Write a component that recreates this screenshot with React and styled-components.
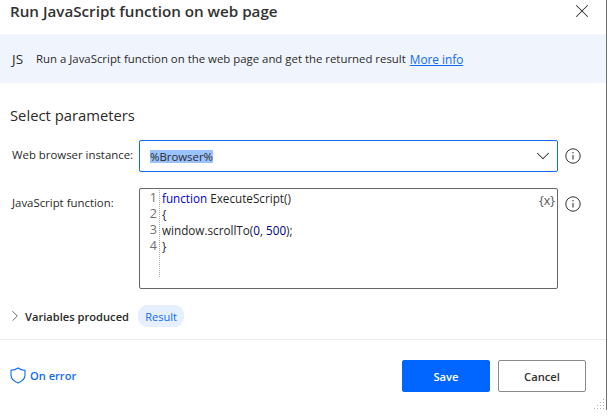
import React from 'react';
import styled, { createGlobalStyle } from 'styled-components';
import { ChevronDown, ChevronRight, X } from 'lucide-react';

const GlobalStyle = createGlobalStyle`
  html, body {
    margin: 0;
    padding: 0;
    background: #fff;
  }
  body {
    font-family: "Open Sans", "Noto Sans", "Liberation Sans", sans-serif;
    color: #2b2a29;
  }
`;

const Dialog = styled.div`
  width: 607px;
  height: 410px;
  box-sizing: border-box;
  border-right: 1px solid #6e6e6e;
  display: flex;
  flex-direction: column;
  background: #fff;
`;

const Header = styled.div`
  height: 34px;
  flex: none;
  box-sizing: border-box;
  display: flex;
  align-items: flex-start;
  justify-content: space-between;
  padding: 0 13px 0 10px;
`;

const Title = styled.h1`
  margin: 0;
  font-size: 15.2px;
  line-height: 22px;
  font-weight: 600;
  color: #323130;
`;

const CloseButton = styled.button`
  border: 0;
  background: none;
  padding: 0;
  display: flex;
  color: #323130;
`;

const Banner = styled.div`
  height: 49px;
  flex: none;
  background: #f0f5fd;
  display: flex;
  align-items: center;
  padding-left: 12px;
  font-size: 11.4px;
  white-space: nowrap;
`;

const BannerIcon = styled.span`
  font-size: 13.5px;
  width: 24px;
`;

const MoreInfo = styled.a`
  color: #0f6cf0;
  font-size: 11.8px;
  text-decoration: underline;
  margin-left: 4px;
`;

const Form = styled.div`
  flex: 1;
  padding: 21px 0 0 10px;
  display: flex;
  flex-direction: column;
`;

const Section = styled.h2`
  margin: 0 0 14px;
  font-size: 14.8px;
  line-height: 22px;
  font-weight: 400;
`;

const Row = styled.div`
  display: grid;
  grid-template-columns: 129px 419px auto;
  margin-bottom: 16px;
`;

const Label = styled.label`
  font-size: 11.4px;
  line-height: 30px;
  padding-left: 2px;
  white-space: nowrap;
`;

const Select = styled.div`
  height: 32px;
  box-sizing: border-box;
  border: 1px solid #0f6cf0;
  border-radius: 2px;
  display: flex;
  align-items: center;
  justify-content: space-between;
  padding: 0 3px 0 10px;
  font-size: 11.4px;
`;

const Selected = styled.span`
  background: #99c2ff;
  line-height: 13px;
`;

const Editor = styled.div`
  position: relative;
  height: 101px;
  box-sizing: border-box;
  border: 1px solid #666;
  border-radius: 2px;
  padding-top: 1px;
  display: flex;
  font-size: 11.7px;
  color: #1f1f1f;
`;

const Gutter = styled.div`
  width: 20px;
  height: 87px;
  flex: none;
  box-sizing: border-box;
  padding-right: 2px;
  border-right: 1px dotted #aaa;
  text-align: right;
  color: #6e6e6e;
  font-size: 12.5px;
  line-height: 16px;
`;

const Code = styled.div`
  padding-left: 2px;
  line-height: 16px;
`;

const Line = styled.div`
  white-space: pre;
`;

const Keyword = styled.span`
  color: #0000e0;
`;

const Num = styled.span`
  color: #000080;
`;

const VarToken = styled.span`
  position: absolute;
  top: 4px;
  right: 2px;
  font-size: 12.5px;
  line-height: 16px;
  color: #555;
`;

const InfoCell = styled.div`
  display: flex;
  padding: 8px 0 0 7px;
`;

const Variables = styled.div`
  display: flex;
  align-items: center;
  height: 22px;
  font-size: 11.15px;
  font-weight: 600;
`;

const Caret = styled.span`
  display: flex;
  width: 19px;
  margin-left: -4px;
  color: #555;
`;

const Chip = styled.span`
  margin-left: 9px;
  height: 22px;
  width: 46px;
  display: flex;
  align-items: center;
  justify-content: center;
  border-radius: 9px;
  background: #e6effd;
  color: #0f6cf0;
  font-size: 11px;
  font-weight: 400;
`;

const Footer = styled.div`
  height: 71px;
  flex: none;
  box-sizing: border-box;
  border-top: 1px solid #ebebeb;
  display: flex;
  align-items: flex-start;
  justify-content: space-between;
  padding: 20px 20px 0 10px;
`;

const ErrorLink = styled.a`
  display: flex;
  align-items: center;
  gap: 4px;
  height: 32px;
  padding-bottom: 2px;
  box-sizing: border-box;
  color: #0f6cf0;
  font-size: 11.1px;
  font-weight: 600;
`;

const Actions = styled.div`
  display: flex;
  gap: 8px;
`;

const Button = styled.button`
  width: 88px;
  height: 32px;
  box-sizing: border-box;
  border-radius: 2px;
  border: 1px solid ${(p) => (p.$primary ? '#0066ff' : '#8a8a8a')};
  background: ${(p) => (p.$primary ? '#0066ff' : '#fff')};
  color: ${(p) => (p.$primary ? '#fff' : '#323130')};
  font-family: inherit;
  font-size: 11.2px;
  font-weight: 600;
  padding: 0;
`;

const Grip = styled.svg`
  position: absolute;
  left: 594px;
  top: 398px;
`;

function InfoIcon() {
  return (
    <svg width="16" height="16" viewBox="0 0 16 16" fill="none" stroke="#323130">
      <circle cx="8" cy="8" r="7.2" />
      <path d="M8 7v4.6" />
      <circle cx="8" cy="4.8" r="0.7" fill="#323130" stroke="none" />
    </svg>
  );
}

function ShieldIcon() {
  return (
    <svg width="16" height="17" viewBox="0 0 16 17" fill="none" stroke="#0f6cf0" strokeWidth="1.1">
      <path d="M8 1 C10 2.6 12.6 3.2 15 3.2 V8 C15 11.8 12 14.4 8 16 C4 14.4 1 11.8 1 8 V3.2 C3.4 3.2 6 2.6 8 1 Z" />
    </svg>
  );
}

const GRIP_DOTS = [[9, 1], [6, 4], [9, 4], [3, 7], [6, 7], [9, 7], [0, 10], [3, 10], [6, 10], [9, 10]];

export default function App() {
  return (
    <>
      <GlobalStyle />
      <Dialog>
        <Header>
          <Title>Run JavaScript function on web page</Title>
          <CloseButton><X size={22} strokeWidth={1.1} /></CloseButton>
        </Header>
        <Banner>
          <BannerIcon>JS</BannerIcon>
          Run a JavaScript function on the web page and get the returned result
          <MoreInfo>More info</MoreInfo>
        </Banner>
        <Form>
          <Section>Select parameters</Section>
          <Row>
            <Label>Web browser instance:</Label>
            <Select>
              <Selected>%Browser%</Selected>
              <ChevronDown size={22} strokeWidth={1.1} />
            </Select>
            <InfoCell><InfoIcon /></InfoCell>
          </Row>
          <Row>
            <Label>JavaScript function:</Label>
            <Editor>
              <Gutter>
                <div>1</div>
                <div>2</div>
                <div>3</div>
                <div>4</div>
              </Gutter>
              <Code>
                <Line><Keyword>function</Keyword> ExecuteScript()</Line>
                <Line>{'{'}</Line>
                <Line>window.scrollTo(<Num>0</Num>, <Num>500</Num>);</Line>
                <Line>{'}'}</Line>
              </Code>
              <VarToken>{'{x}'}</VarToken>
            </Editor>
            <InfoCell><InfoIcon /></InfoCell>
          </Row>
          <Variables>
            <Caret><ChevronRight size={18} strokeWidth={1.2} /></Caret>
            Variables produced
            <Chip>Result</Chip>
          </Variables>
        </Form>
        <Footer>
          <ErrorLink><ShieldIcon />On error</ErrorLink>
          <Actions>
            <Button $primary>Save</Button>
            <Button>Cancel</Button>
          </Actions>
        </Footer>
      </Dialog>
      <Grip width="11" height="12" viewBox="0 0 11 12" fill="#a9b4c2">
        {GRIP_DOTS.map(([x, y]) => <rect key={`${x}-${y}`} x={x} y={y} width="1" height="1" />)}
      </Grip>
    </>
  );
}
